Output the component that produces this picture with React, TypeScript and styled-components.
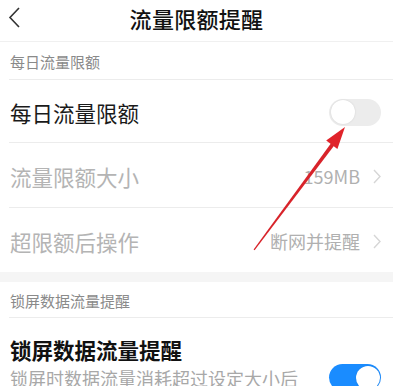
import React from "react";
import styled, { createGlobalStyle } from "styled-components";

const Global = createGlobalStyle`
  html, body { margin: 0; padding: 0; background: #fff; overflow: hidden; }
  body { font-family: "Noto Sans CJK SC", "Noto Sans", sans-serif; -webkit-font-smoothing: antialiased; }
  #root { position: relative; width: 393px; height: 386px; overflow: hidden; }
`;

const Page = styled.div`
  width: 393px;
  background: #fff;
`;

const Header = styled.header`
  height: 42px;
  box-sizing: border-box;
  display: grid;
  grid-template-columns: 40px 1fr 40px;
  align-items: center;
  padding-bottom: 6px;
  border-bottom: 1px solid #f0f0f0;
`;

const Back = styled.div`
  display: flex;
  align-items: center;
  padding-left: 8px;
  height: 22px;
`;

const Title = styled.h1`
  margin: 0;
  text-align: center;
  font-size: 22px;
  font-weight: 500;
  color: #111;
  line-height: 30px;
  letter-spacing: 0.3px;
`;

const Section = styled.section`
  padding-left: 9px;
`;

const SectionHead = styled.div<{ $h: number }>`
  height: ${(p) => p.$h}px;
  box-sizing: border-box;
  display: flex;
  align-items: center;
  padding-left: 1px;
  padding-top: 2px;
  font-size: 15px;
  color: #8a8a8a;
  border-bottom: 1px solid #ececec;
`;

const Row = styled.div<{ $h: number; $last?: boolean }>`
  height: ${(p) => p.$h}px;
  box-sizing: border-box;
  display: flex;
  align-items: center;
  justify-content: space-between;
  padding: 2px 12px 0 1px;
  border-bottom: ${(p) => (p.$last ? "none" : "1px solid #ececec")};
`;

const Label = styled.span<{ $disabled?: boolean }>`
  font-size: 21.5px;
  color: ${(p) => (p.$disabled ? "#b4b4b4" : "#1a1a1a")};
`;

const Value = styled.span`
  display: flex;
  align-items: center;
  gap: 13px;
  font-size: 18px;
  color: #b0b0b0;
`;

const Band = styled.div`
  height: 10px;
  background: #f5f5f5;
`;

const LockRow = styled.div`
  display: flex;
  justify-content: space-between;
  align-items: flex-start;
  padding: 17px 12px 20px 1px;
`;

const TextBlock = styled.div`
  display: flex;
  flex-direction: column;
`;

const BoldLabel = styled.span`
  font-size: 21.5px;
  font-weight: 700;
  color: #111;
  line-height: 30px;
`;

const Sub = styled.span`
  font-size: 18px;
  color: #a8a8a8;
  line-height: 26px;
`;

const Track = styled.div<{ $on?: boolean; $top?: number }>`
  width: 52px;
  height: 27px;
  border-radius: 14px;
  box-sizing: border-box;
  background: ${(p) => (p.$on ? "#1a8cff" : "#ececec")};
  display: flex;
  align-items: center;
  justify-content: ${(p) => (p.$on ? "flex-end" : "flex-start")};
  padding: 0 1.5px;
  margin-top: ${(p) => p.$top ?? 0}px;
  flex-shrink: 0;
`;

const Knob = styled.div`
  width: 24px;
  height: 24px;
  border-radius: 50%;
  background: #fff;
  box-shadow: 0 0 2px rgba(0, 0, 0, 0.12);
`;

const Overlay = styled.svg`
  position: absolute;
  left: 0;
  top: 0;
  pointer-events: none;
`;

const Chevron = () => (
  <svg width="8" height="15" viewBox="0 0 8 15">
    <path d="M1 1 L7 7.5 L1 14" fill="none" stroke="#d6d6d6" strokeWidth="1.4" />
  </svg>
);

export default function App() {
  return (
    <>
      <Global />
      <Page>
        <Header>
          <Back>
            <svg width="12" height="21" viewBox="0 0 12 21">
              <path d="M11 1 L2 10.5 L11 20" fill="none" stroke="#333" strokeWidth="1.6" />
            </svg>
          </Back>
          <Title>流量限额提醒</Title>
          <div />
        </Header>
        <Section>
          <SectionHead $h={38}>每日流量限额</SectionHead>
          <Row $h={63}>
            <Label>每日流量限额</Label>
            <Track>
              <Knob />
            </Track>
          </Row>
          <Row $h={65}>
            <Label $disabled>流量限额大小</Label>
            <Value>
              159MB
              <Chevron />
            </Value>
          </Row>
          <Row $h={64} $last>
            <Label $disabled>超限额后操作</Label>
            <Value>
              断网并提醒
              <Chevron />
            </Value>
          </Row>
        </Section>
        <Band />
        <Section>
          <SectionHead $h={36}>锁屏数据流量提醒</SectionHead>
          <LockRow>
            <TextBlock>
              <BoldLabel>锁屏数据流量提醒</BoldLabel>
              <Sub>锁屏时数据流量消耗超过设定大小后</Sub>
            </TextBlock>
            <Track $on $top={29}>
              <Knob />
            </Track>
          </LockRow>
        </Section>
      </Page>
      <Overlay width="393" height="386" viewBox="0 0 393 386">
        <polygon points="253.6,249.4 254.6,250.2 334.6,145.1 331.4,142.7" fill="#d8232a" />
        <polygon points="345,127 337.4,148.9 326.2,140.5" fill="#e0232a" />
      </Overlay>
    </>
  );
}
